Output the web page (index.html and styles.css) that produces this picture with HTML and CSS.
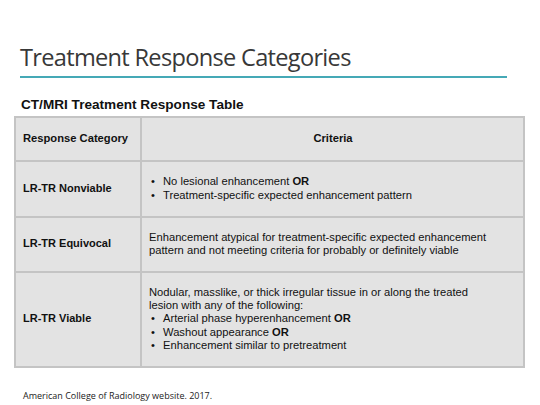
FILE: index.html
```html
<!DOCTYPE html>
<html>
<head>
<meta charset="utf-8">
<link rel="stylesheet" href="styles.css">
</head>
<body>
<div class="slide">
  <h1 class="title">Treatment Response Categories</h1>
  <div class="rule"></div>
  <h2 class="subtitle">CT/MRI Treatment Response Table</h2>
  <table class="tr-table">
    <tr class="row-head">
      <th class="col-cat">Response Category</th>
      <th class="col-crit">Criteria</th>
    </tr>
    <tr class="row-a">
      <td class="cat">LR-TR Nonviable</td>
      <td class="crit">
        <ul class="blist">
          <li>No lesional enhancement <b>OR</b></li>
          <li>Treatment-specific expected enhancement pattern</li>
        </ul>
      </td>
    </tr>
    <tr class="row-b">
      <td class="cat">LR-TR Equivocal</td>
      <td class="crit">Enhancement atypical for treatment-specific expected enhancement<br>pattern and not meeting criteria for probably or definitely viable</td>
    </tr>
    <tr class="row-c">
      <td class="cat">LR-TR Viable</td>
      <td class="crit">Nodular, masslike, or thick irregular tissue in or along the treated<br>lesion with any of the following:
        <ul class="blist">
          <li>Arterial phase hyperenhancement <b>OR</b></li>
          <li>Washout appearance <b>OR</b></li>
          <li>Enhancement similar to pretreatment</li>
        </ul>
      </td>
    </tr>
  </table>
  <p class="source">American College of Radiology website. 2017.</p>
</div>
</body>
</html>
```

FILE: styles.css
```css
html, body {
  margin: 0;
  padding: 0;
  background: #ffffff;
}
.slide {
  width: 540px;
  height: 405px;
  box-sizing: border-box;
  padding: 42px 0 0 0;
  overflow: hidden;
}
.title {
  margin: 0 0 0 20px;
  font-family: "Open Sans", sans-serif;
  font-weight: 400;
  font-size: 23.6px;
  line-height: 30px;
  color: #383838;
  letter-spacing: -0.7px;
}
.rule {
  margin: 4px 0 0 20px;
  width: 487px;
  height: 1.5px;
  background: #45a9b6;
}
.subtitle {
  margin: 18px 0 0 21px;
  font-family: "Liberation Sans", Arial, sans-serif;
  font-weight: bold;
  font-size: 13.6px;
  line-height: 17px;
  color: #111;
}
.tr-table {
  margin: 3px 0 0 14px;
  width: 511px;
  border-collapse: collapse;
  background: #e3e3e3;
  font-family: "Liberation Sans", Arial, sans-serif;
  font-size: 11.2px;
  line-height: 13.3px;
  color: #111;
}
.tr-table th, .tr-table td {
  border: 2px solid #c4c4c4;
  padding: 0 6px 0 7px;
  vertical-align: middle;
  text-align: left;
}
.tr-table th {
  font-weight: bold;
}
.col-cat { width: 111px; }
.col-crit { text-align: center !important; }
.row-head { height: 44px; }
.row-a { height: 56px; }
.row-b { height: 55px; }
.row-c { height: 95px; }
.cat { font-weight: bold; font-size: 11px; }
.blist {
  list-style: none;
  margin: 0;
  padding: 0;
}
.blist li {
  position: relative;
  padding-left: 14px;
}
.blist li::before {
  content: "•";
  position: absolute;
  left: 2px;
  top: 0;
}
.source {
  margin: 21px 0 0 23px;
  font-family: "Open Sans", sans-serif;
  font-size: 9px;
  color: #222;
}
```
